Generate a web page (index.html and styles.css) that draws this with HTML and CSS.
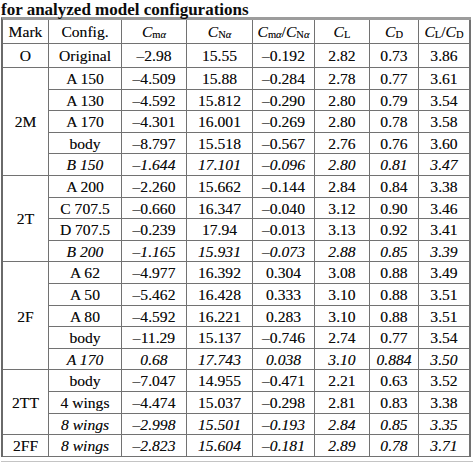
FILE: index.html
```html
<!DOCTYPE html>
<html>
<head>
<meta charset="utf-8">
<link rel="stylesheet" href="styles.css">
</head>
<body>
<div class="title">for analyzed model configurations</div>
<div class="tbl">
  <div class="row head">
    <div class="cell">Mark</div>
    <div class="cell">Config.</div>
    <div class="cell"><i>C</i><span class="sub">m<i>α</i></span></div>
    <div class="cell"><i>C</i><span class="sub">N<i>α</i></span></div>
    <div class="cell"><i>C</i><span class="sub">m<i>α</i></span>/<i>C</i><span class="sub">N<i>α</i></span></div>
    <div class="cell"><i>C</i><span class="sub">L</span></div>
    <div class="cell"><i>C</i><span class="sub">D</span></div>
    <div class="cell last"><i>C</i><span class="sub">L</span>/<i>C</i><span class="sub">D</span></div>
  </div>

  <div class="row">
    <div class="cell mark">O</div>
    <div class="cell">Original</div><div class="cell">–2.98</div><div class="cell">15.55</div><div class="cell">–0.192</div><div class="cell">2.82</div><div class="cell">0.73</div><div class="cell last">3.86</div>
  </div>

  <div class="row">
    <div class="cell mark span5">2M</div>
    <div class="cell">A 150</div><div class="cell">–4.509</div><div class="cell">15.88</div><div class="cell">–0.284</div><div class="cell">2.78</div><div class="cell">0.77</div><div class="cell last">3.61</div>
  </div>
  <div class="row">
    <div class="cell">A 130</div><div class="cell">–4.592</div><div class="cell">15.812</div><div class="cell">–0.290</div><div class="cell">2.80</div><div class="cell">0.79</div><div class="cell last">3.54</div>
  </div>
  <div class="row">
    <div class="cell">A 170</div><div class="cell">–4.301</div><div class="cell">16.001</div><div class="cell">–0.269</div><div class="cell">2.80</div><div class="cell">0.78</div><div class="cell last">3.58</div>
  </div>
  <div class="row">
    <div class="cell">body</div><div class="cell">–8.797</div><div class="cell">15.518</div><div class="cell">–0.567</div><div class="cell">2.76</div><div class="cell">0.76</div><div class="cell last">3.60</div>
  </div>
  <div class="row it">
    <div class="cell">B 150</div><div class="cell">–1.644</div><div class="cell">17.101</div><div class="cell">–0.096</div><div class="cell">2.80</div><div class="cell">0.81</div><div class="cell last">3.47</div>
  </div>

  <div class="row">
    <div class="cell mark span4">2T</div>
    <div class="cell">A 200</div><div class="cell">–2.260</div><div class="cell">15.662</div><div class="cell">–0.144</div><div class="cell">2.84</div><div class="cell">0.84</div><div class="cell last">3.38</div>
  </div>
  <div class="row">
    <div class="cell">C 707.5</div><div class="cell">–0.660</div><div class="cell">16.347</div><div class="cell">–0.040</div><div class="cell">3.12</div><div class="cell">0.90</div><div class="cell last">3.46</div>
  </div>
  <div class="row">
    <div class="cell">D 707.5</div><div class="cell">–0.239</div><div class="cell">17.94</div><div class="cell">–0.013</div><div class="cell">3.13</div><div class="cell">0.92</div><div class="cell last">3.41</div>
  </div>
  <div class="row it">
    <div class="cell">B 200</div><div class="cell">–1.165</div><div class="cell">15.931</div><div class="cell">–0.073</div><div class="cell">2.88</div><div class="cell">0.85</div><div class="cell last">3.39</div>
  </div>

  <div class="row">
    <div class="cell mark span5">2F</div>
    <div class="cell">A 62</div><div class="cell">–4.977</div><div class="cell">16.392</div><div class="cell">0.304</div><div class="cell">3.08</div><div class="cell">0.88</div><div class="cell last">3.49</div>
  </div>
  <div class="row">
    <div class="cell">A 50</div><div class="cell">–5.462</div><div class="cell">16.428</div><div class="cell">0.333</div><div class="cell">3.10</div><div class="cell">0.88</div><div class="cell last">3.51</div>
  </div>
  <div class="row">
    <div class="cell">A 80</div><div class="cell">–4.592</div><div class="cell">16.221</div><div class="cell">0.283</div><div class="cell">3.10</div><div class="cell">0.88</div><div class="cell last">3.51</div>
  </div>
  <div class="row">
    <div class="cell">body</div><div class="cell">–11.29</div><div class="cell">15.137</div><div class="cell">–0.746</div><div class="cell">2.74</div><div class="cell">0.77</div><div class="cell last">3.54</div>
  </div>
  <div class="row it">
    <div class="cell">A 170</div><div class="cell">0.68</div><div class="cell">17.743</div><div class="cell">0.038</div><div class="cell">3.10</div><div class="cell">0.884</div><div class="cell last">3.50</div>
  </div>

  <div class="row">
    <div class="cell mark span3">2TT</div>
    <div class="cell">body</div><div class="cell">–7.047</div><div class="cell">14.955</div><div class="cell">–0.471</div><div class="cell">2.21</div><div class="cell">0.63</div><div class="cell last">3.52</div>
  </div>
  <div class="row">
    <div class="cell">4 wings</div><div class="cell">–4.474</div><div class="cell">15.037</div><div class="cell">–0.298</div><div class="cell">2.81</div><div class="cell">0.83</div><div class="cell last">3.38</div>
  </div>
  <div class="row it">
    <div class="cell">8 wings</div><div class="cell">–2.998</div><div class="cell">15.501</div><div class="cell">–0.193</div><div class="cell">2.84</div><div class="cell">0.85</div><div class="cell last">3.35</div>
  </div>

  <div class="row it">
    <div class="cell mark">2FF</div>
    <div class="cell">8 wings</div><div class="cell">–2.823</div><div class="cell">15.604</div><div class="cell">–0.181</div><div class="cell">2.89</div><div class="cell">0.78</div><div class="cell last">3.71</div>
  </div>
</div>
<div class="rule"></div>
</body>
</html>
```

FILE: styles.css
```css
html, body {
  margin: 0;
  padding: 0;
  background: #ffffff;
}

body {
  font-family: "Liberation Serif", "Times New Roman", serif;
  color: #0c0c0c;
  width: 474px;
  height: 463px;
  overflow: hidden;
}

.title {
  font-weight: bold;
  font-size: 17px;
  line-height: 19px;
  height: 17px;
  padding-left: 1px;
  white-space: nowrap;
}

.tbl {
  display: grid;
  grid-template-columns: 46px 73px 65px 66px 62px 55px 49px 52px;
  grid-template-rows: 24px 24px repeat(18, 21.6px);
  margin-left: 1px;
  width: 468px;
  border-top: 3px solid #9c9c9c;
  border-left: 2px solid #6a6a6a;
  font-size: 15.6px;
  text-shadow: 0 0 0.4px rgba(0, 0, 0, 0.45);
}

.row {
  display: contents;
}

.cell {
  box-sizing: border-box;
  display: flex;
  align-items: center;
  justify-content: center;
  border-right: 1px solid #727272;
  border-bottom: 1px solid #727272;
  white-space: nowrap;
  line-height: 1;
  padding-top: 1px;
}

.cell.last {
  border-right: 2px solid #727272;
}

.span5 { grid-row: span 5; }
.span4 { grid-row: span 4; }
.span3 { grid-row: span 3; }

.it .cell {
  font-style: italic;
}

.it .cell.mark {
  font-style: normal;
}

.sub {
  font-size: 10.5px;
  position: relative;
  top: 3px;
}

.rule {
  margin-top: 4px;
  margin-left: 1px;
  width: 472px;
  height: 1px;
  background: #c4c4c4;
}
```
